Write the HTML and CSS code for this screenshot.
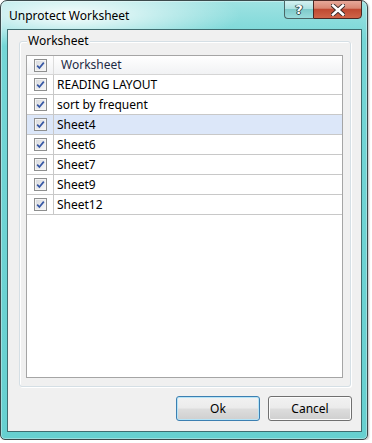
FILE: index.html
```html
<!DOCTYPE html>
<html lang="en">
<head>
  <meta charset="UTF-8">
  <title>Unprotect Worksheet</title>
  <link rel="stylesheet" href="styles.css">
</head>
<body>
  <div class="window">
    <div class="titlebar">
      <span class="title">Unprotect Worksheet</span>
      <div class="caption-buttons">
        <div class="cap-btn help">?</div>
        <div class="cap-btn close">
          <svg width="14" height="12" viewBox="0 0 14 12">
            <path d="M2 1.5 L12 10.5 M12 1.5 L2 10.5" stroke="#3a2a28" stroke-width="4.4" stroke-linecap="square"/>
            <path d="M2 1.5 L12 10.5 M12 1.5 L2 10.5" stroke="#fff" stroke-width="2.6" stroke-linecap="square"/>
          </svg>
        </div>
      </div>
    </div>

    <div class="client">
      <div class="group">
        <span class="group-title">Worksheet</span>
        <div class="list">
          <div class="list-header">
            <div class="cell-check"><span class="check"><svg width="9" height="9" viewBox="0 0 9 9"><path d="M1.2 4.6 L3.4 7 L7.8 1.6" fill="none" stroke="#3556a4" stroke-width="1.7"/></svg></span></div>
            <div class="cell-name">Worksheet</div>
          </div>
          <div class="row">
            <div class="cell-check"><span class="check"><svg width="9" height="9" viewBox="0 0 9 9"><path d="M1.2 4.6 L3.4 7 L7.8 1.6" fill="none" stroke="#3556a4" stroke-width="1.7"/></svg></span></div>
            <div class="cell-name">READING LAYOUT</div>
          </div>
          <div class="row">
            <div class="cell-check"><span class="check"><svg width="9" height="9" viewBox="0 0 9 9"><path d="M1.2 4.6 L3.4 7 L7.8 1.6" fill="none" stroke="#3556a4" stroke-width="1.7"/></svg></span></div>
            <div class="cell-name">sort by frequent</div>
          </div>
          <div class="row selected">
            <div class="cell-check"><span class="check"><svg width="9" height="9" viewBox="0 0 9 9"><path d="M1.2 4.6 L3.4 7 L7.8 1.6" fill="none" stroke="#3556a4" stroke-width="1.7"/></svg></span></div>
            <div class="cell-name">Sheet4</div>
          </div>
          <div class="row">
            <div class="cell-check"><span class="check"><svg width="9" height="9" viewBox="0 0 9 9"><path d="M1.2 4.6 L3.4 7 L7.8 1.6" fill="none" stroke="#3556a4" stroke-width="1.7"/></svg></span></div>
            <div class="cell-name">Sheet6</div>
          </div>
          <div class="row">
            <div class="cell-check"><span class="check"><svg width="9" height="9" viewBox="0 0 9 9"><path d="M1.2 4.6 L3.4 7 L7.8 1.6" fill="none" stroke="#3556a4" stroke-width="1.7"/></svg></span></div>
            <div class="cell-name">Sheet7</div>
          </div>
          <div class="row">
            <div class="cell-check"><span class="check"><svg width="9" height="9" viewBox="0 0 9 9"><path d="M1.2 4.6 L3.4 7 L7.8 1.6" fill="none" stroke="#3556a4" stroke-width="1.7"/></svg></span></div>
            <div class="cell-name">Sheet9</div>
          </div>
          <div class="row">
            <div class="cell-check"><span class="check"><svg width="9" height="9" viewBox="0 0 9 9"><path d="M1.2 4.6 L3.4 7 L7.8 1.6" fill="none" stroke="#3556a4" stroke-width="1.7"/></svg></span></div>
            <div class="cell-name">Sheet12</div>
          </div>
        </div>
      </div>

      <div class="buttons">
        <button class="btn default">Ok</button>
        <button class="btn">Cancel</button>
      </div>
    </div>
  </div>
</body>
</html>
```

FILE: styles.css
```css
body {
  margin: 0;
  background: #fff;
  font-family: "Noto Sans", "Open Sans", sans-serif;
  font-size: 12px;
}
.window {
  width: 368px;
  height: 440px;
  box-sizing: border-box;
  display: flex;
  flex-direction: column;
  padding: 0 5px 7px 6px;
  border: 1px solid #3c4a4c;
  border-radius: 7px 7px 5px 5px;
  background:
    radial-gradient(ellipse 170px 34px at 70px 14px, rgba(255,255,255,0.95), rgba(255,255,255,0) 100%),
    linear-gradient(to bottom, #9fe2e2 0px, #74d6d6 40px, #66d0d0 100%);
  box-shadow: inset 0 0 0 1px rgba(255,255,255,0.35), 1px 1px 2px rgba(0,0,0,0.25);
}
.titlebar {
  height: 28px;
  display: flex;
  justify-content: space-between;
  align-items: flex-start;
}
.title {
  margin-top: 7px;
  margin-left: 2px;
  line-height: 16px;
  color: #000;
}
.caption-buttons {
  display: flex;
  margin-top: -1px;
}
.cap-btn {
  height: 19px;
  box-sizing: border-box;
  display: flex;
  align-items: center;
  justify-content: center;
}
.help {
  width: 29px;
  border: 1px solid #4b6767;
  border-right: none;
  border-radius: 0 0 0 4px;
  background: linear-gradient(to bottom, #d5f1f1 0%, #aee2e2 45%, #7fcaca 50%, #9adcdc 100%);
  color: #fff;
  font-family: "DejaVu Sans", sans-serif;
  font-weight: bold;
  font-size: 13px;
  text-shadow: 0 0 1px #2d4a4a, 0 0 1px #2d4a4a, 1px 0 0 #3b5757, -1px 0 0 #3b5757, 0 1px 0 #3b5757;
}
.close {
  width: 49px;
  border: 1px solid #4a2824;
  border-radius: 0 0 4px 0;
  background: linear-gradient(to bottom, #e6a899 0%, #d98874 42%, #c04a32 50%, #cf6448 100%);
}
.client {
  flex: 1;
  display: flex;
  flex-direction: column;
  background: #f0f0f0;
  border: 1px solid #3f6d70;
  padding: 11px 9px 10px 11px;
}
.group {
  position: relative;
  flex: 1;
  display: flex;
  margin-right: 1px;
  padding: 13px 7px 8px 6px;
  border: 1px solid #d5dfe5;
  border-radius: 3px;
  box-shadow: inset 1px 1px 0 #fff, 1px 1px 0 #fff;
}
.group-title {
  position: absolute;
  top: -9px;
  left: 7px;
  padding: 0 1px;
  line-height: 16px;
  background: #f0f0f0;
  color: #000;
}
.list {
  flex: 1;
  border: 1px solid #a5a5a5;
  background: #fff;
}
.list-header, .row {
  display: flex;
  height: 19px;
  box-sizing: border-box;
}
.list-header {
  height: 19px;
  background: linear-gradient(to bottom, #ffffff, #f1f2f4);
  border-bottom: 1px solid #d5d5d5;
  color: #1e2a44;
}
.row {
  height: 20px;
  border-bottom: 1px solid #c8c8c8;
}
.row.selected {
  background: #dce7f9;
}
.cell-check {
  width: 27px;
  box-sizing: border-box;
  border-right: 1px solid #c8c8c8;
  display: flex;
  align-items: center;
  justify-content: center;
  padding-left: 1px;
}
.list-header .cell-check {
  border-right-color: #dcdcdc;
}
.cell-name {
  padding-left: 3px;
  line-height: 19px;
  color: #000;
}
.list-header .cell-name {
  padding-left: 7px;
  line-height: 18px;
  color: #1e2a44;
}
.check {
  width: 13px;
  height: 13px;
  box-sizing: border-box;
  border: 1px solid #8e8f8f;
  background: linear-gradient(135deg, #d6d8dc, #f8f8f8);
  box-shadow: inset 0 0 0 1px #f4f4f4;
  display: flex;
  align-items: center;
  justify-content: center;
}
.check svg {
  display: block;
}
.buttons {
  display: flex;
  justify-content: flex-end;
  gap: 8px;
  margin-top: 9px;
}
.btn {
  width: 84px;
  height: 25px;
  padding: 0;
  font-family: "Noto Sans", "Open Sans", sans-serif;
  font-size: 12px;
  color: #000;
  border: 1px solid #707070;
  border-radius: 3px;
  background: linear-gradient(to bottom, #f2f2f2 0%, #ebebeb 48%, #dddddd 52%, #cfcfcf 100%);
  box-shadow: inset 0 0 0 1px #fcfcfc;
}
.btn.default {
  border-color: #3c7fb1;
  box-shadow: inset 0 0 0 1px #b6e4f7;
}
```
